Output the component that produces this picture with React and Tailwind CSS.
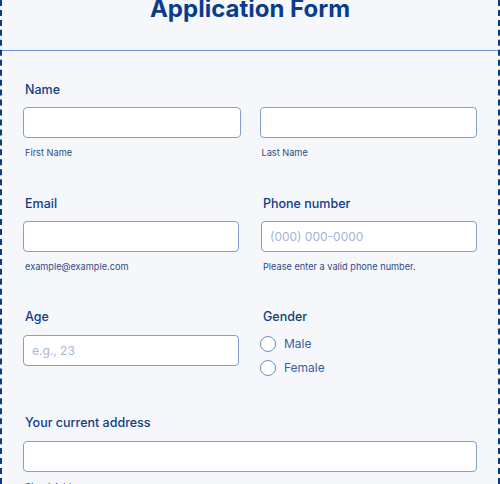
import React from "react";

const labelCls = "text-[12.5px] leading-[20px] font-medium text-[#0f3c88] pl-[2px]";
const subCls = "mt-[8px] text-[9.2px] leading-[14px] text-[#2e4d88] pl-[2px]";
const inputCls = "h-[31px] rounded-[4px] border border-[#839ed0] bg-white flex items-center px-[8px]";
const phCls = "text-[12px] text-[#a4b5d8]";

function Radio({ label }) {
  return (
    <div className="h-[24px] flex items-center">
      <span className="w-[16px] h-[16px] rounded-full border-[1.5px] border-[#6f8fca] bg-white -ml-[1px]"></span>
      <span className="ml-[8px] text-[12px] text-[#3a5fa3]">{label}</span>
    </div>
  );
}

export default function App() {
  return (
    <div
      className="w-[500px] h-[484px] overflow-hidden bg-[#f5f7fa] border-x-2 border-dashed border-[#0b3b8c]"
      style={{ fontFamily: "Inter, 'Noto Sans', sans-serif" }}
    >
      <div className="h-[51px] border-b border-[#6d8fcb] flex flex-col items-center">
        <div className="-mt-[3px] text-[24px] leading-[24px] font-bold text-[#0b3b8c]">Application Form</div>
      </div>
      <div className="px-[21px] pt-[29px]">
        <div className="flex flex-col">
          <div className={labelCls}>Name</div>
          <div className="grid grid-cols-2 gap-x-[19px] mt-[7px]">
            <div className="flex flex-col">
              <div className={inputCls}></div>
              <div className={subCls}>First Name</div>
            </div>
            <div className="flex flex-col">
              <div className={inputCls}></div>
              <div className={subCls}>Last Name</div>
            </div>
          </div>
        </div>

        <div className="grid grid-cols-2 gap-x-[22px] mt-[34px]">
          <div className="flex flex-col">
            <div className={labelCls}>Email</div>
            <div className={"mt-[7px] " + inputCls}></div>
            <div className={subCls}>example@example.com</div>
          </div>
          <div className="flex flex-col">
            <div className={labelCls}>Phone number</div>
            <div className={"mt-[7px] " + inputCls}>
              <span className={phCls}>(000) 000-0000</span>
            </div>
            <div className={subCls}>Please enter a valid phone number.</div>
          </div>
        </div>

        <div className="grid grid-cols-2 gap-x-[22px] mt-[33px]">
          <div className="flex flex-col">
            <div className={labelCls}>Age</div>
            <div className={"mt-[8px] " + inputCls}>
              <span className={phCls}>e.g., 23</span>
            </div>
          </div>
          <div className="flex flex-col">
            <div className={labelCls}>Gender</div>
            <div className="mt-[5px] flex flex-col">
              <Radio label="Male" />
              <Radio label="Female" />
            </div>
          </div>
        </div>

        <div className="flex flex-col mt-[33px]">
          <div className={labelCls}>Your current address</div>
          <div className={"mt-[8px] " + inputCls}></div>
          <div className={subCls}>Street Address</div>
        </div>
      </div>
    </div>
  );
}
